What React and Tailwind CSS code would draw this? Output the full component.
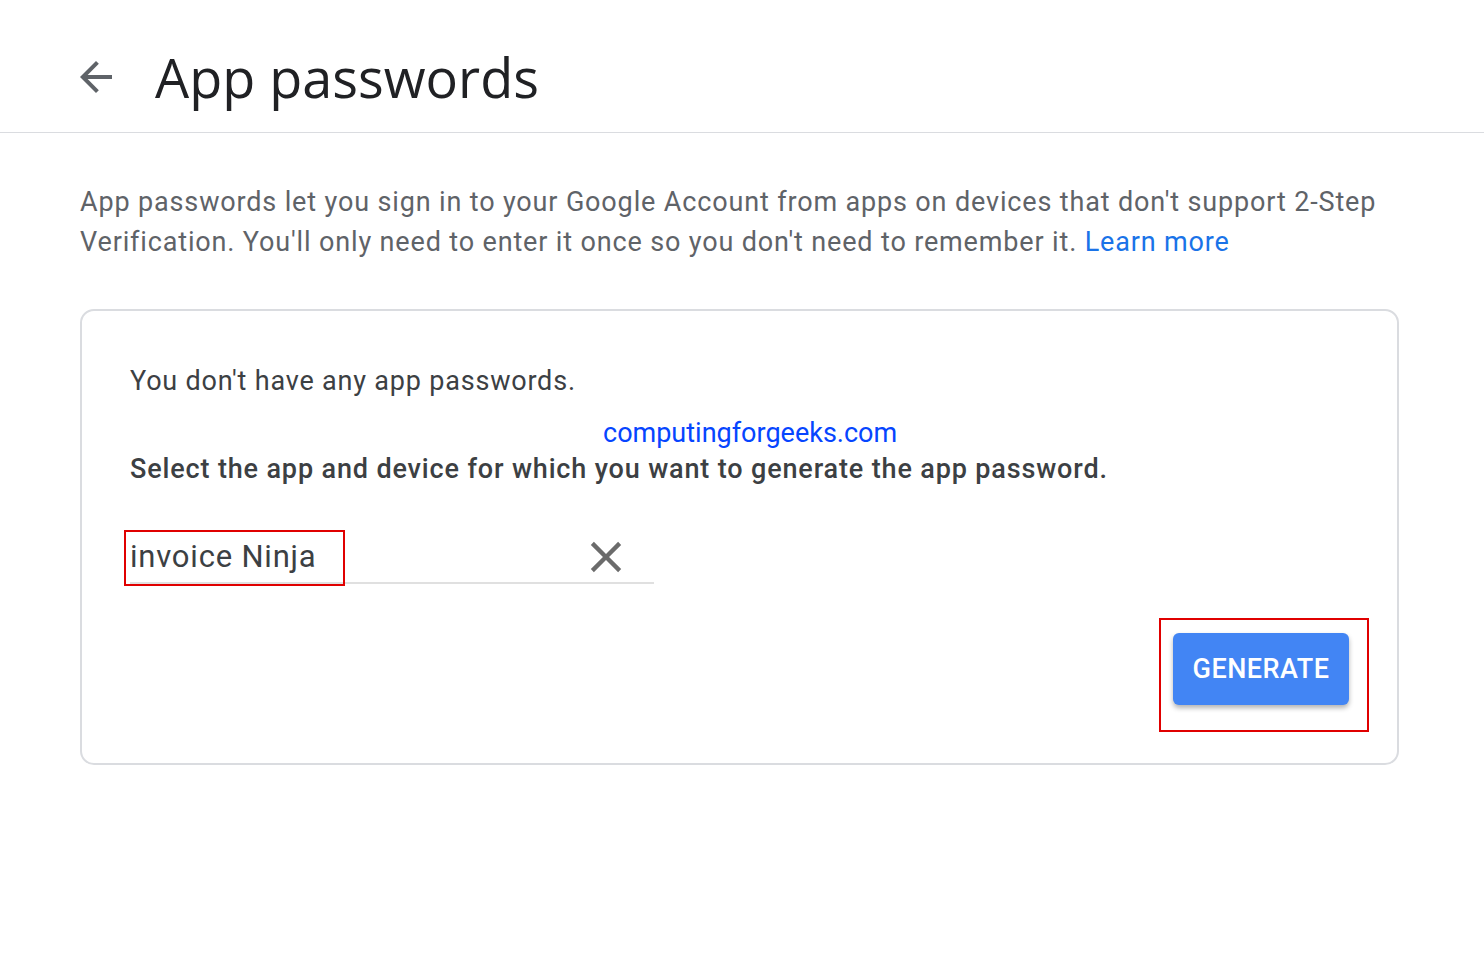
export default function App() {
  return (
    <div className="min-h-[970px] w-full bg-white font-['Roboto',sans-serif] text-[#3c4043]">
      {/* Header */}
      <div className="flex h-[133px] items-center border-b border-[#dadce0] pt-[22px] pl-[72px]">
        <svg width="48" height="48" viewBox="0 0 24 24" className="text-[#5f6368]">
          <path d="M20 11H7.83l5.59-5.59L12 4l-8 8 8 8 1.41-1.41L7.83 13H20v-2z" fill="currentColor" />
        </svg>
        <h1 className="ml-[35px] font-['Open_Sans',sans-serif] text-[54px] leading-none text-[#202124]">
          App passwords
        </h1>
      </div>

      <div className="px-[80px] pt-[49px]">
        <p className="text-[27px] leading-[40px] tracking-[0.85px] text-[#5f6368]">
          App passwords let you sign in to your Google Account from apps on devices that don't support 2-Step
          Verification. You'll only need to enter it once so you don't need to remember it.{' '}
          <span className="text-[#1a73e8]">Learn more</span>
        </p>

        {/* Card */}
        <div className="mt-[47px] w-[1319px] rounded-[14px] border-2 border-[#dadce0] px-[48px] pt-[50px] pb-[58px]">
          <p className="text-[27px] leading-[40px] tracking-[0.8px]">You don't have any app passwords.</p>
          <p className="mt-[16px] pl-[473px] text-[27px] leading-[32px] text-[#0645ff]">computingforgeeks.com</p>
          <p className="text-[27px] font-medium leading-[40px] tracking-[0.85px]">
            Select the app and device for which you want to generate the app password.
          </p>

          <div className="mt-[48px] flex w-[524px] items-center border-b-2 border-[#e0e0e0] pb-[5px]">
            <div className="relative flex-1">
              <span className="text-[31px] leading-[40px] tracking-[0.8px] text-[#3c4043]">invoice Ninja</span>
              <div className="absolute -top-[7px] -left-[6px] h-[56px] w-[221px] border-2 border-[#e00000]"></div>
            </div>
            <svg width="52" height="52" viewBox="0 0 24 24" className="-my-[6px] mr-[22px] text-[#6b6b6b]">
              <path
                d="M19 6.41L17.59 5 12 10.59 6.41 5 5 6.41 10.59 12 5 17.59 6.41 19 12 13.41 17.59 19 19 17.59 13.41 12z"
                fill="currentColor"
              />
            </svg>
          </div>

          <div className="mt-[49px] flex justify-end">
            <div className="relative">
              <div className="absolute -top-[15px] -right-[20px] -bottom-[27px] -left-[14px] border-2 border-[#e00000]"></div>
              <button className="relative flex h-[72px] w-[176px] items-center justify-center rounded-[6px] bg-[#4285f4] text-[27px] font-medium tracking-[0.5px] text-white shadow-[0_3px_5px_rgba(0,0,0,0.3)]">
                GENERATE
              </button>
            </div>
          </div>
        </div>
      </div>
    </div>
  )
}
